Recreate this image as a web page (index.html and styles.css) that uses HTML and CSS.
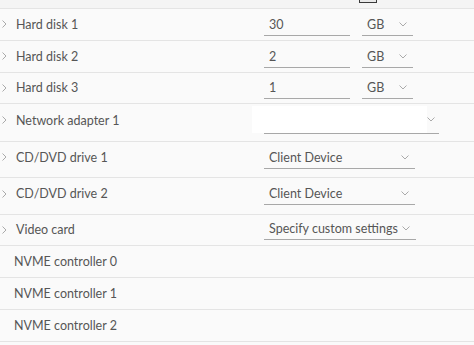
FILE: index.html
```html
<!DOCTYPE html>
<html lang="en">
<head>
    <meta charset="UTF-8">
    <title>Edit Settings</title>
    <link rel="stylesheet" href="styles.css">
</head>
<body>
    <div class="hw-list">
        <div class="top-strip"><div class="stub"></div></div>

        <div class="row h32">
            <div class="label"><span class="caret"><svg width="5" height="8" viewBox="0 0 5 8"><path d="M0.5 0.5 L4 4 L0.5 7.5" /></svg></span>Hard disk 1</div>
            <div class="value">
                <div class="field size">30</div>
                <div class="field unit">GB<svg class="down" width="8" height="5" viewBox="0 0 8 5"><path d="M0.5 0.5 L4 4 L7.5 0.5" /></svg></div>
            </div>
        </div>
        <div class="row h32">
            <div class="label"><span class="caret"><svg width="5" height="8" viewBox="0 0 5 8"><path d="M0.5 0.5 L4 4 L0.5 7.5" /></svg></span>Hard disk 2</div>
            <div class="value">
                <div class="field size">2</div>
                <div class="field unit">GB<svg class="down" width="8" height="5" viewBox="0 0 8 5"><path d="M0.5 0.5 L4 4 L7.5 0.5" /></svg></div>
            </div>
        </div>
        <div class="row h31">
            <div class="label"><span class="caret"><svg width="5" height="8" viewBox="0 0 5 8"><path d="M0.5 0.5 L4 4 L0.5 7.5" /></svg></span>Hard disk 3</div>
            <div class="value">
                <div class="field size">1</div>
                <div class="field unit">GB<svg class="down" width="8" height="5" viewBox="0 0 8 5"><path d="M0.5 0.5 L4 4 L7.5 0.5" /></svg></div>
            </div>
        </div>
        <div class="row h38">
            <div class="label raised"><span class="caret"><svg width="5" height="8" viewBox="0 0 5 8"><path d="M0.5 0.5 L4 4 L0.5 7.5" /></svg></span>Network adapter 1</div>
            <div class="value net">
                <div class="net-box">
                    <div class="field net-select"><svg class="down" width="8" height="5" viewBox="0 0 8 5"><path d="M0.5 0.5 L4 4 L7.5 0.5" /></svg></div>
                </div>
            </div>
        </div>
        <div class="row h36">
            <div class="label raised"><span class="caret"><svg width="5" height="8" viewBox="0 0 5 8"><path d="M0.5 0.5 L4 4 L0.5 7.5" /></svg></span>CD/DVD drive 1</div>
            <div class="value">
                <div class="field select">Client Device<svg class="down" width="8" height="5" viewBox="0 0 8 5"><path d="M0.5 0.5 L4 4 L7.5 0.5" /></svg></div>
            </div>
        </div>
        <div class="row h37">
            <div class="label raised"><span class="caret"><svg width="5" height="8" viewBox="0 0 5 8"><path d="M0.5 0.5 L4 4 L0.5 7.5" /></svg></span>CD/DVD drive 2</div>
            <div class="value">
                <div class="field select">Client Device<svg class="down" width="8" height="5" viewBox="0 0 8 5"><path d="M0.5 0.5 L4 4 L7.5 0.5" /></svg></div>
            </div>
        </div>
        <div class="row h31">
            <div class="label"><span class="caret"><svg width="5" height="8" viewBox="0 0 5 8"><path d="M0.5 0.5 L4 4 L0.5 7.5" /></svg></span>Video card</div>
            <div class="value">
                <div class="field select wide">Specify custom settings<svg class="down" width="8" height="5" viewBox="0 0 8 5"><path d="M0.5 0.5 L4 4 L7.5 0.5" /></svg></div>
            </div>
        </div>
        <div class="row h32">
            <div class="label plain">NVME controller 0</div>
        </div>
        <div class="row h32">
            <div class="label plain">NVME controller 1</div>
        </div>
        <div class="row h32">
            <div class="label plain">NVME controller 2</div>
        </div>
    </div>
</body>
</html>
```

FILE: styles.css
```css
* {
    box-sizing: border-box;
}

body {
    margin: 0;
    background-color: #fafafa;
    font-family: 'Lato', 'Liberation Sans', sans-serif;
    font-size: 12.5px;
    color: #565656;
    white-space: nowrap;
}

.hw-list {
    width: 474px;
}

.top-strip {
    height: 9px;
    background-color: #f4f4f4;
    border-bottom: 1px solid #e4e4e4;
    padding-left: 359px;
}

.stub {
    width: 18px;
    height: 3px;
    border: 1px solid #3a3a3a;
    border-top: none;
    background-color: #e8e8e8;
}

.row {
    display: flex;
    align-items: center;
    border-bottom: 1px solid #e4e4e4;
}

.h31 { height: 31px; }
.h32 { height: 32px; }
.h36 { height: 36px; }
.h37 { height: 37px; }
.h38 { height: 38px; }

.label {
    width: 264px;
    display: flex;
    align-items: center;
    flex-shrink: 0;
    padding-bottom: 1px;
}

.label.raised {
    padding-bottom: 5px;
}

.label.plain {
    padding-left: 14px;
}

.caret {
    width: 16px;
    padding-left: 2px;
    display: flex;
    align-items: center;
}

.caret path,
.down path {
    fill: none;
    stroke: #aaa;
    stroke-width: 1;
}

.value {
    display: flex;
    align-items: center;
    gap: 12px;
}

.field {
    display: flex;
    align-items: center;
    justify-content: space-between;
    height: 22px;
    padding: 0 6px 0 5px;
    border-bottom: 1px solid #a8a8a8;
}

.size {
    width: 86px;
}

.unit {
    width: 51px;
}

.select {
    width: 151px;
    margin-bottom: 4px;
}

.select.wide {
    width: 152px;
    margin-bottom: 2px;
}

.net-box {
    width: 175px;
    height: 27px;
    margin-left: -12px;
    margin-bottom: 6px;
    background-color: #fff;
}

.net-select {
    width: 175px;
    height: 28px;
    margin-left: 12px;
    justify-content: flex-end;
    padding-right: 4px;
}
```
